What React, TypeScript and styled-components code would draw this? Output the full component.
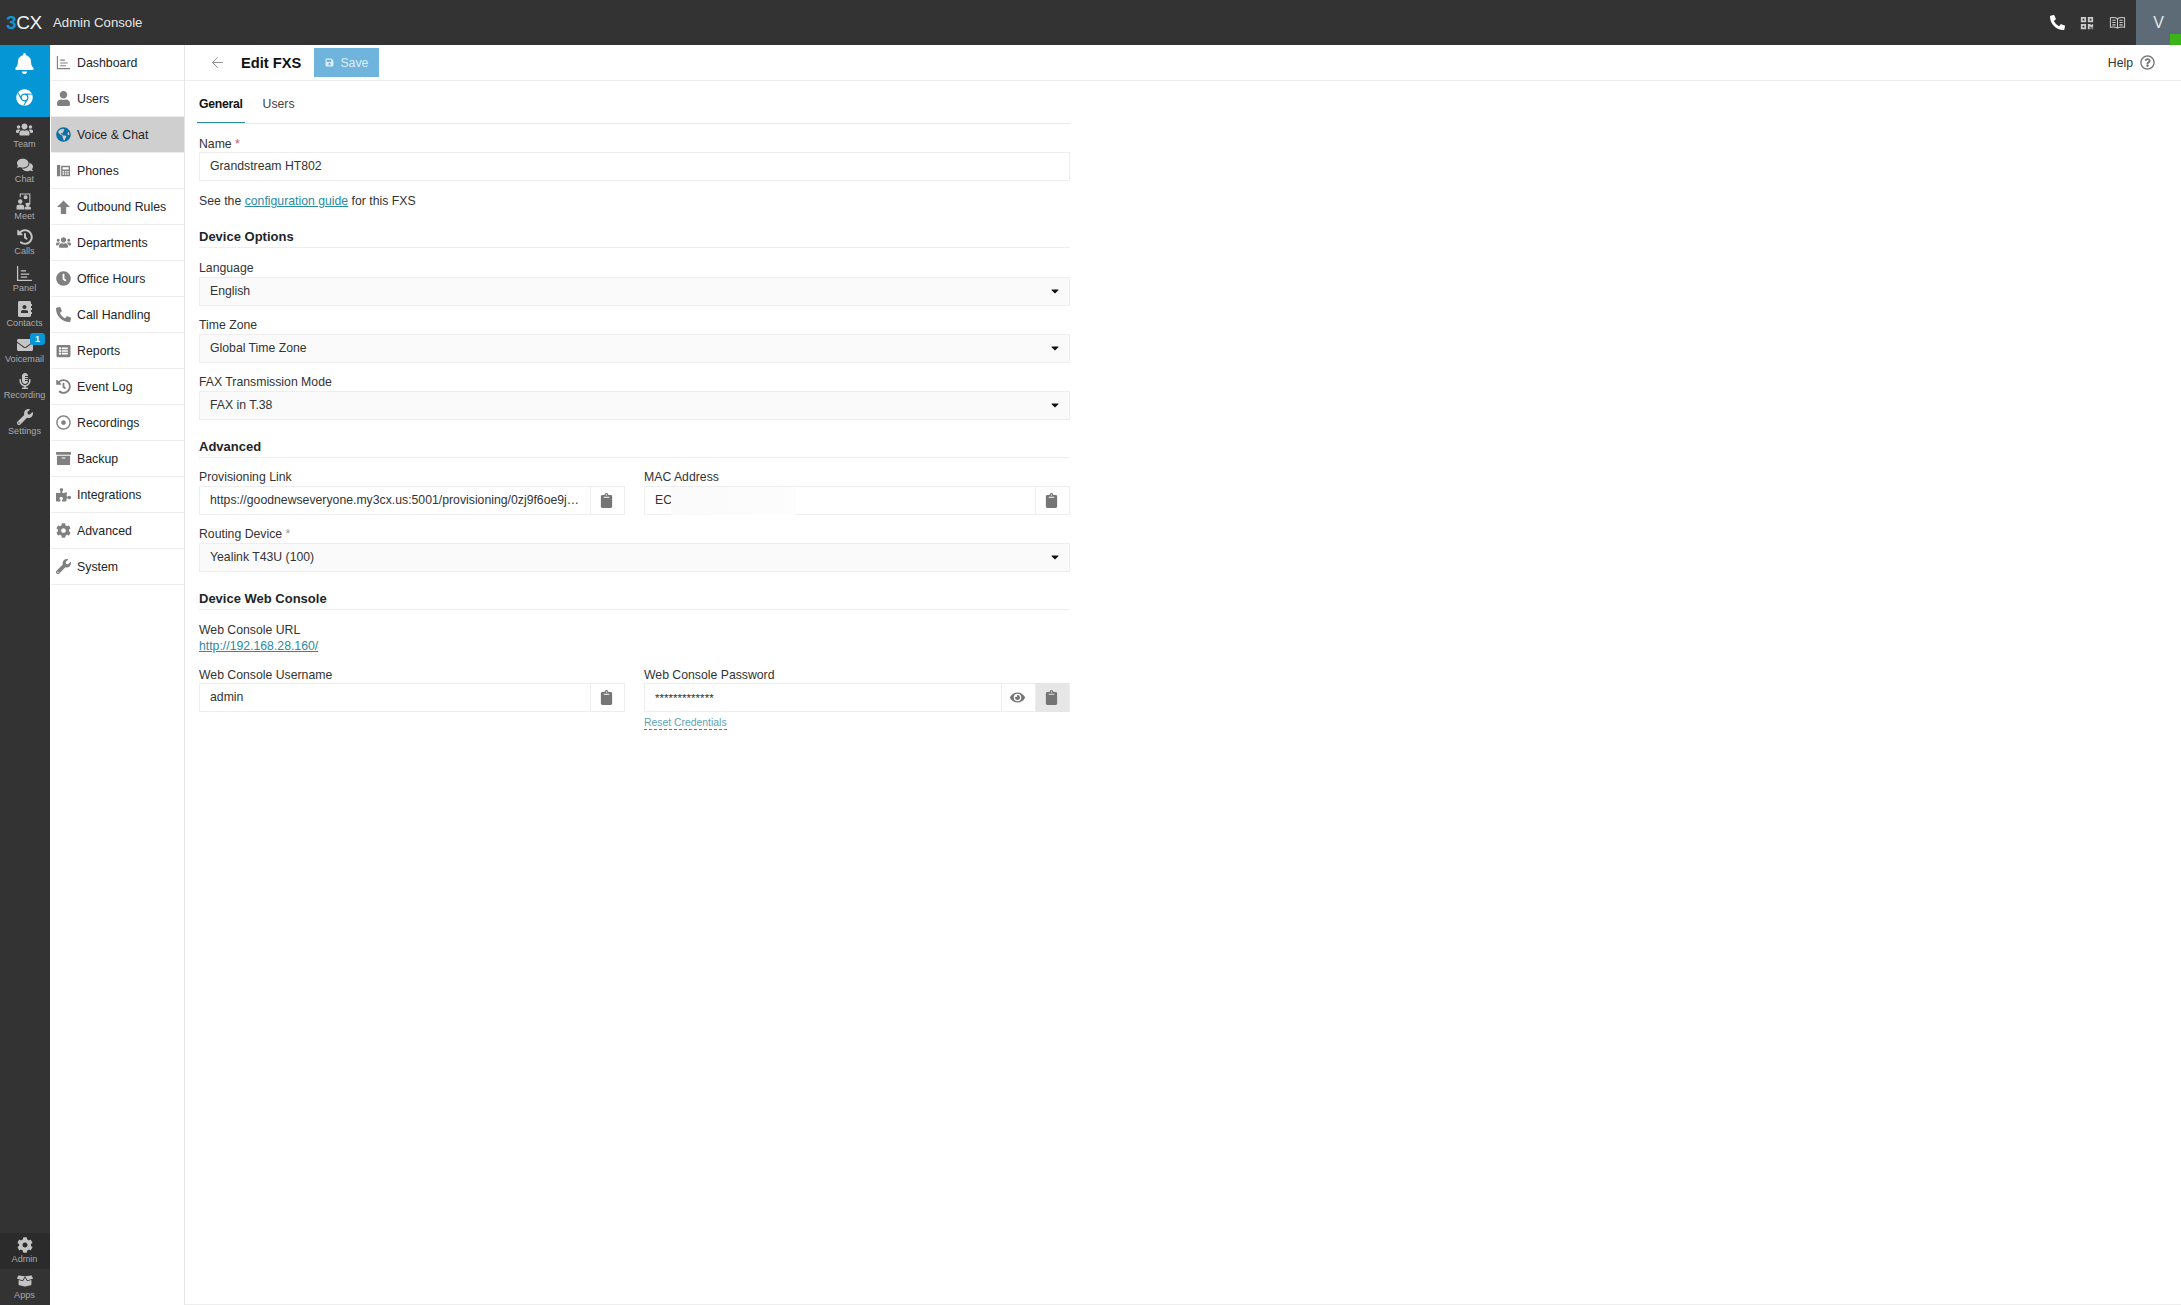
import React from "react";
import styled, { createGlobalStyle } from "styled-components";
import {
  FaUser, FaGlobeAmericas, FaUsers, FaClock, FaPhone, FaPhoneAlt, FaListAlt, FaHistory,
  FaRegDotCircle, FaArchive, FaPuzzlePiece, FaCog, FaWrench, FaBell, FaChrome, FaComments, FaAddressBook,
  FaEnvelope, FaMicrophoneAlt, FaBoxOpen, FaQrcode, FaRegQuestionCircle, FaClipboard, FaEye, FaSave, FaCaretDown,
} from "react-icons/fa";
import { ArrowLeft } from "lucide-react";

const Global = createGlobalStyle`
  html, body { margin: 0; padding: 0; height: 100%; overflow: hidden; background: #fff; }
  body { font-family: "Liberation Sans", Arial, sans-serif; font-size: 12.25px; color: #212529; }
  * { box-sizing: border-box; }
`;

const Shell = styled.div`display: grid; grid-template-rows: 45px 1fr; height: 1305px; width: 2181px;`;
const TopBar = styled.header`display: flex; align-items: center; background: #333; color: #fff; height: 45px;`;
const Logo = styled.div`width: 53px; padding-left: 6px; font-size: 19px; letter-spacing: -0.4px; font-weight: 400; color: #f2f2f2; white-space: nowrap;`;
const LogoMark = styled.span`color: #0e96d0; font-weight: 700;`;
const Title = styled.div`font-size: 13.2px; color: #e6e6e6;`;
const TopIcons = styled.div`margin-left: auto; display: flex; align-items: center; gap: 15px; padding-right: 10px; color: #ccc;`;
const Avatar = styled.div`position: relative; width: 45px; height: 45px; background: #5c6b75; color: #e3e8ea; font-size: 16px; display: flex; align-items: center; justify-content: center;`;
const Presence = styled.span`position: absolute; right: 0; bottom: 0; width: 11px; height: 11px; background: #3bb31b;`;

const Body = styled.div`display: grid; grid-template-columns: 50px 135px 1fr; min-height: 0;`;
const Rail = styled.nav`display: flex; flex-direction: column; background: #333;`;
const RailAlert = styled.div`height: 72px; background: #0596d5; color: #fff; display: flex; flex-direction: column; align-items: center; justify-content: space-around; padding: 0 1px 3px 0;`;
const RailItem = styled.div<{ $dark?: boolean }>`
  position: relative; height: 36px; padding: 0 1px 1px 0; display: flex; flex-direction: column; align-items: center; justify-content: center;
  color: #a9a9a9; font-size: 9.15px; line-height: 10px; gap: 1px; background: ${(p) => (p.$dark ? "#2b2b2b" : "transparent")};
  svg { color: #c4c4c4; }
`;
const Spacer = styled.div`flex: 1;`;
const Badge = styled.span`position: absolute; top: 0; left: 30px; width: 15px; height: 12px; border-radius: 3px; background: #0596d5; color: #fff; font-size: 9px; font-weight: 700; line-height: 12px; text-align: center;`;

const Menu = styled.nav`display: flex; flex-direction: column; border-right: 1px solid #e6e6e6; padding-left: 1px;`;
const MenuRow = styled.div<{ $active?: boolean }>`
  height: 36px; display: flex; align-items: center; gap: 6px; padding-left: 5px; border-bottom: 1px solid #eee; font-size: 12.35px;
  background: ${(p) => (p.$active ? "#cfcfcf" : "#fff")}; color: #212529;
  & > svg { color: #808080; flex: none; width: 15px; }
`;
const Blue = styled.span`display: inline-flex; flex: none; width: 15px; svg { color: #0f6f9e; }`;

const Main = styled.main`display: flex; flex-direction: column; border-bottom: 1px solid #eee;`;
const PageHeader = styled.div`height: 36px; display: flex; align-items: center; border-bottom: 1px solid #eee; padding-left: 24px; padding-right: 26px;`;
const Back = styled.span`display: inline-flex; color: #666; margin-right: 15px;`;
const PageTitle = styled.h1`margin: 0 13px 0 0; font-size: 14.7px; font-weight: 700; color: #111;`;
const SaveBtn = styled.button`height: 29px; width: 65px; border: 0; background: #6fb4dc; color: #dcedf6; font: inherit; display: flex; align-items: center; justify-content: center; gap: 6px;`;
const Help = styled.div`margin-left: auto; display: flex; align-items: center; gap: 7px; color: #333; svg { color: #777; }`;

const Form = styled.div`width: 886px; padding-left: 14px;`;
const Tabs = styled.div`display: flex; height: 43px; border-bottom: 1px solid #e8e8e8; margin-left: -2px; width: 873px;`;
const Tab = styled.div<{ $active?: boolean }>`
  height: 42px; padding: 16px 2px 0; margin-right: 16px; font-weight: ${(p) => (p.$active ? 700 : 400)}; letter-spacing: ${(p) => (p.$active ? "-0.3px" : "0")};
  color: ${(p) => (p.$active ? "#111" : "#444")}; border-bottom: ${(p) => (p.$active ? "1px solid #2d8aa3" : "0")};
`;
const Content = styled.div`width: 871px;`;
const Label = styled.div<{ $tight?: boolean }>`height: 14px; line-height: 14px; margin-bottom: ${(p) => (p.$tight ? 1 : 2)}px; color: #333;`;
const Req = styled.span<{ $grey?: boolean }>`color: ${(p) => (p.$grey ? "#999" : "#c55")};`;
const Field = styled.div<{ $top: number }>`margin-top: ${(p) => p.$top}px; min-width: 0;`;
const Input = styled.div<{ $shade?: boolean }>`
  position: relative; height: 29px; border: 1px solid #eee; background: ${(p) => (p.$shade ? "#fafafa" : "#fff")};
  display: flex; align-items: center; color: #333;
`;
const Value = styled.div<{ $stars?: boolean }>`flex: 1; min-width: 0; padding: 0 0 1px 10px; white-space: nowrap; font-size: ${(p) => (p.$stars ? "11.6px" : "inherit")};`;
const Caret = styled.span`display: inline-flex; padding: 0 8px 1px 0; color: #111;`;
const Addon = styled.span<{ $on?: boolean }>`
  flex: none; width: 34px; height: 29px; padding-right: 2px; border-left: 1px solid #eee; display: flex; align-items: center; justify-content: center; color: #757575;
  background: ${(p) => (p.$on ? "#e6e6e6" : "transparent")};
`;
const Blur = styled.span`position: absolute; left: 26px; top: 0; width: 125px; height: 28px; background: linear-gradient(90deg, #fafafa, #fcfcfc 60%, #fdfdfd);`;
const Section = styled.h2<{ $top: number }>`margin: ${(p) => p.$top}px 0 0; height: 20px; line-height: 18px; font-size: 13px; font-weight: 700; color: #212529; border-bottom: 1px solid #eee;`;
const Row = styled.div`display: grid; grid-template-columns: 426px 426px; column-gap: 19px;`;
const Text = styled.p`margin: 12px 0 0; line-height: 16px; color: #333;`;
const Link = styled.a`color: #2d8aa3; text-decoration: underline;`;
const Reset = styled.span`display: inline-block; margin-top: 4px; font-size: 10.4px; line-height: 13px; color: #5ea3b8; border-bottom: 1px dashed #2d8aa3;`;

const Dash = ({ s = 15 }: { s?: number }) => (
  <svg width={s} height={s} viewBox="0 0 16 16" fill="none" stroke="currentColor" strokeWidth="1.2">
    <path d="M1.5 1v13.5H15M4.5 5.5h5M4.5 8.5h8M4.5 11.5h6" />
  </svg>
);
const Desk = () => (
  <svg width="15" height="15" viewBox="0 0 16 16" fill="currentColor">
    <path fillRule="evenodd" d="M1 2h3.5v12H1zM5.5 3H15v11H5.5zM7 4.5v2.5h6.5V4.5zM7 8.5V10h1.5V8.5zM9.5 8.5V10H11V8.5zM12 8.5V10h1.5V8.5zM7 11v1.500h1.500V11zM9.500 11v1.500H11V11zM12 11v1.500h1.500V11z" />
  </svg>
);
const UpArrow = () => (
  <svg width="15" height="14" viewBox="0 0 15 14" fill="currentColor">
    <path d="M7.500 0.500L14 7H10.200V14H4.800V7H1Z" />
  </svg>
);
const MeetIcon = () => (
  <svg width="17" height="17" viewBox="0 0 16 16" fill="none" stroke="currentColor" strokeWidth="1">
    <path d="M4 4V1h9v9H9" />
    <circle cx="9" cy="4" r="1.400" fill="currentColor" />
    <circle cx="4" cy="8" r="1.600" fill="currentColor" />
    <circle cx="11" cy="11" r="1.400" fill="currentColor" />
    <path d="M1 15v-2.500C1 11 7 11 7 12.500V15zM8.500 15v-1c0-1 5-1 5 0v1z" fill="currentColor" />
  </svg>
);
const Book = () => (
  <svg width="17" height="14" viewBox="0 0 18 14" fill="none" stroke="currentColor" strokeWidth="1.100">
    <path d="M9 2.500C7 1 4 1 1.500 1.500V11.500C4 11 7 11 9 12.500C11 11 14 11 16.500 11.500V1.500C14 1 11 1 9 2.500ZM9 2.500V12.500M3.500 4H7M3.500 6.500H7M3.500 9H7M11 4H14.500M11 6.500H14.500M11 9H14.500" />
  </svg>
);

const rail: [string, React.ReactNode][] = [
  ["Team", <FaUsers size={17} />],
  ["Chat", <FaComments size={16} />],
  ["Meet", <MeetIcon />],
  ["Calls", <FaHistory size={16} />],
  ["Panel", <Dash s={17} />],
  ["Contacts", <FaAddressBook size={16} />],
  ["Voicemail", <FaEnvelope size={16} />],
  ["Recording", <FaMicrophoneAlt size={16} />],
  ["Settings", <FaWrench size={16} />],
];

const menu: [string, React.ReactNode][] = [
  ["Dashboard", <Dash />],
  ["Users", <FaUser size={15} />],
  ["Voice & Chat", <Blue><FaGlobeAmericas size={15} /></Blue>],
  ["Phones", <Desk />],
  ["Outbound Rules", <UpArrow />],
  ["Departments", <FaUsers size={15} />],
  ["Office Hours", <FaClock size={15} />],
  ["Call Handling", <FaPhone size={15} style={{ transform: "scaleX(-1)" }} />],
  ["Reports", <FaListAlt size={14} />],
  ["Event Log", <FaHistory size={15} />],
  ["Recordings", <FaRegDotCircle size={15} />],
  ["Backup", <FaArchive size={15} />],
  ["Integrations", <FaPuzzlePiece size={16} />],
  ["Advanced", <FaCog size={15} />],
  ["System", <FaWrench size={15} />],
];

const Copy = ({ on }: { on?: boolean }) => (
  <Addon $on={on}><FaClipboard size={15} /></Addon>
);

const Select = ({ value }: { value: string }) => (
  <Input $shade>
    <Value>{value}</Value>
    <Caret><FaCaretDown size={12} /></Caret>
  </Input>
);

export default function App() {
  return (
    <Shell>
      <Global />
      <TopBar>
        <Logo><LogoMark>3</LogoMark>CX</Logo>
        <Title>Admin Console</Title>
        <TopIcons>
          <FaPhoneAlt size={15} color="#fff" />
          <FaQrcode size={14} />
          <Book />
        </TopIcons>
        <Avatar>V<Presence /></Avatar>
      </TopBar>
      <Body>
        <Rail>
          <RailAlert>
            <FaBell size={21} />
            <FaChrome size={17} />
          </RailAlert>
          {rail.map(([label, icon]) => (
            <RailItem key={label}>
              {icon}
              {label}
              {label === "Voicemail" && <Badge>1</Badge>}
            </RailItem>
          ))}
          <Spacer />
          <RailItem $dark><FaCog size={16} />Admin</RailItem>
          <RailItem><FaBoxOpen size={16} />Apps</RailItem>
        </Rail>
        <Menu>
          {menu.map(([label, icon]) => (
            <MenuRow key={label} $active={label === "Voice & Chat"}>
              {icon}
              {label}
            </MenuRow>
          ))}
        </Menu>
        <Main>
          <PageHeader>
            <Back><ArrowLeft size={17} strokeWidth={1} /></Back>
            <PageTitle>Edit FXS</PageTitle>
            <SaveBtn><FaSave size={9} />Save</SaveBtn>
            <Help>Help <FaRegQuestionCircle size={15} /></Help>
          </PageHeader>
          <Form>
            <Tabs>
              <Tab $active>General</Tab>
              <Tab>Users</Tab>
            </Tabs>
            <Content>
              <Field $top={13}>
                <Label $tight>Name <Req>*</Req></Label>
                <Input><Value>Grandstream HT802</Value></Input>
              </Field>
              <Text>See the <Link>configuration guide</Link> for this FXS</Text>
              <Section $top={19}>Device Options</Section>
              <Field $top={13}>
                <Label>Language</Label>
                <Select value="English" />
              </Field>
              <Field $top={12}>
                <Label>Time Zone</Label>
                <Select value="Global Time Zone" />
              </Field>
              <Field $top={12}>
                <Label>FAX Transmission Mode</Label>
                <Select value="FAX in T.38" />
              </Field>
              <Section $top={18}>Advanced</Section>
              <Row>
                <Field $top={12}>
                  <Label>Provisioning Link</Label>
                  <Input>
                    <Value>https://goodnewseveryone.my3cx.us:5001/provisioning/0zj9f6oe9j…</Value>
                    <Copy />
                  </Input>
                </Field>
                <Field $top={12}>
                  <Label>MAC Address</Label>
                  <Input>
                    <Value>EC</Value>
                    <Blur />
                    <Copy />
                  </Input>
                </Field>
              </Row>
              <Field $top={12}>
                <Label>Routing Device <Req $grey>*</Req></Label>
                <Select value="Yealink T43U (100)" />
              </Field>
              <Section $top={18}>Device Web Console</Section>
              <Field $top={13}>
                <Label>Web Console URL</Label>
                <Link>http://192.168.28.160/</Link>
              </Field>
              <Row>
                <Field $top={15}>
                  <Label $tight>Web Console Username</Label>
                  <Input>
                    <Value>admin</Value>
                    <Copy />
                  </Input>
                </Field>
                <Field $top={15}>
                  <Label $tight>Web Console Password</Label>
                  <Input>
                    <Value $stars>*************</Value>
                    <Addon><FaEye size={15} /></Addon>
                    <Copy on />
                  </Input>
                  <Reset>Reset Credentials</Reset>
                </Field>
              </Row>
            </Content>
          </Form>
        </Main>
      </Body>
    </Shell>
  );
}
